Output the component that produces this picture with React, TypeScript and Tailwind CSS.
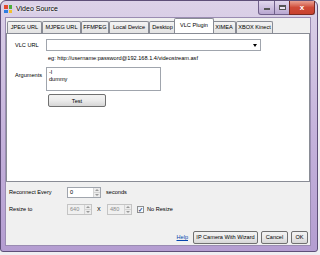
import React from "react";

const font = { fontFamily: '"Liberation Sans", Arial, sans-serif' };

function Tab({ label, w, active }: { label: string; w: number; active?: boolean }) {
  if (active) {
    return (
      <div
        className="relative z-10 -mx-[2px] flex h-[15px] items-start justify-center rounded-t-[2px] border border-b-0 border-[#898c95] bg-white pt-[2px] text-[5.6px] text-black"
        style={{ width: w + 4 }}
      >
        {label}
      </div>
    );
  }
  return (
    <div
      className="flex h-[12px] items-center justify-center rounded-t-[2px] border border-b-0 border-[#898c95] bg-gradient-to-b from-[#f3f3f3] to-[#e3e3e3] text-[5.6px] text-black"
      style={{ width: w }}
    >
      {label}
    </div>
  );
}

function Spin({ value, w, disabled }: { value: string; w: number; disabled?: boolean }) {
  return (
    <div
      className={`flex h-[11px] items-stretch border ${disabled ? "border-[#c4c4c4] bg-[#f0f0f0] text-[#8a8a8a]" : "border-[#a0a5ad] bg-white text-black"}`}
      style={{ width: w }}
    >
      <div className="flex flex-1 items-center pl-[2px] text-[5.6px]">{value}</div>
      <div className="flex w-[7px] flex-col border-l border-[#d4d4d4] bg-[#ececec]">
        <div className="flex flex-1 items-center justify-center border-b border-[#d4d4d4]">
          <div className="h-0 w-0 border-x-[2px] border-b-[2px] border-x-transparent border-b-[#9a9a9a]" />
        </div>
        <div className="flex flex-1 items-center justify-center">
          <div className="h-0 w-0 border-x-[2px] border-t-[2px] border-x-transparent border-t-[#9a9a9a]" />
        </div>
      </div>
    </div>
  );
}

function Btn({ label, w }: { label: string; w: number }) {
  return (
    <div
      className="flex h-[13px] items-center justify-center rounded-[2px] border border-[#707070] bg-gradient-to-b from-[#f2f2f2] via-[#ebebeb] to-[#d6d6d6] text-[5.6px] text-black"
      style={{ width: w }}
    >
      {label}
    </div>
  );
}

export default function App() {
  return (
    <div className="h-[255px] w-[320px] bg-[#eeeef2]" style={font}>
      <div className="flex h-[252px] w-[318px] flex-col rounded-t-[6px] rounded-b-[3px] border border-[#5e4f78] bg-gradient-to-b from-[#dcd2e8] via-[#c6b4dc] to-[#b49dd1]">
        {/* title bar */}
        <div className="flex h-[16px] items-start">
          <div className="ml-[3px] mt-[4px] grid h-[8px] w-[8px] grid-cols-2 gap-[1px]">
            <div className="bg-[#e2492f]" />
            <div className="bg-[#4cae3c]" />
            <div className="bg-[#2e7de0]" />
            <div className="bg-[#f2c12e]" />
          </div>
          <div className="ml-[4px] mt-[3px] text-[7px] text-black [text-shadow:0_0_3px_#fff,0_0_3px_#fff]">Video Source</div>
          <div className="ml-auto mr-[2px] flex h-[14px]">
            <div className="flex w-[17px] items-end justify-center rounded-bl-[3px] border border-t-0 border-[#6f5f8a] bg-gradient-to-b from-[#e2d8ee] to-[#b8a6d0] pb-[4px]">
              <div className="h-[2px] w-[6px] border border-[#555] bg-white" />
            </div>
            <div className="flex w-[14px] items-center justify-center border-b border-[#6f5f8a] bg-gradient-to-b from-[#e2d8ee] to-[#b8a6d0]">
              <div className="h-[5px] w-[7px] border border-[#555] border-t-2 bg-white/60" />
            </div>
            <div className="flex w-[26px] items-center justify-center rounded-br-[3px] border border-t-0 border-[#7a2a22] bg-gradient-to-b from-[#e8a093] via-[#cf4a38] to-[#c8402e] text-[8px] font-bold leading-none text-white">
              x
            </div>
          </div>
        </div>

        {/* client area */}
        <div className="mb-[5px] ml-[4px] mr-[6px] flex flex-1 flex-col border border-[#9a8cb2] bg-[#f0f0f0]">
          {/* tabs */}
          <div className="flex h-[15px] items-end pl-[1px]">
            <Tab label="JPEG URL" w={35} />
            <Tab label="MJPEG URL" w={39} />
            <Tab label="FFMPEG" w={28} />
            <Tab label="Local Device" w={40} />
            <Tab label="Desktop" w={27} />
            <Tab label="VLC Plugin" w={36} active />
            <Tab label="XIMEA" w={24} />
            <Tab label="XBOX Kinect" w={37} />
          </div>
          <div className="relative h-[149px] border border-[#898c95] bg-white text-[5.6px] text-black">
            <div className="flex items-center pt-[5px]">
              <div className="w-[39px] pl-[8px]">VLC URL</div>
              <div className="flex h-[12px] w-[215px] items-center justify-end border border-[#a0a5ad] bg-white pr-[3px]">
                <div className="h-0 w-0 border-x-[2px] border-t-[3px] border-x-transparent border-t-black" />
              </div>
            </div>
            <div className="pl-[41px] pt-[3px]">eg: http://username:password@192.168.1.4/videostream.asf</div>
            <div className="mt-[5px] flex items-start">
              <div className="w-[39px] pl-[8px] pt-[4px]">Arguments</div>
              <div className="h-[24px] w-[115px] border border-[#a0a5ad] bg-white pl-[2px] pt-[1px] leading-[7px]">
                <div>-I</div>
                <div>dummy</div>
              </div>
            </div>
            <div className="ml-[41px] mt-[3px]">
              <Btn label="Test" w={58} />
            </div>
          </div>

          {/* bottom settings */}
          <div className="flex flex-1 flex-col pl-[3px] pt-[5px] text-[5.6px] text-black">
            <div className="flex items-center">
              <div className="w-[58px]">Reconnect Every</div>
              <Spin value="0" w={34} />
              <div className="ml-[5px]">seconds</div>
            </div>
            <div className="mt-[6px] flex items-center">
              <div className="w-[58px]">Resize to</div>
              <Spin value="640" w={25} disabled />
              <div className="ml-[5px] w-[10px]">X</div>
              <Spin value="480" w={25} disabled />
              <div className="ml-[5px] flex h-[7px] w-[7px] items-center justify-center border border-[#8e8f8f] bg-gradient-to-br from-[#e6eef8] to-white text-[6px] font-bold leading-none text-[#2a4c8a]">
                ✓
              </div>
              <div className="ml-[3px]">No Resize</div>
            </div>
            <div className="mt-auto mb-[1px] flex items-center justify-end gap-[3px] pr-[2px]">
              <div className="mr-[2px] text-[#0645ad] underline">Help</div>
              <Btn label="IP Camera With Wizard" w={65} />
              <Btn label="Cancel" w={27} />
              <Btn label="OK" w={17} />
            </div>
          </div>
        </div>
      </div>
    </div>
  );
}
